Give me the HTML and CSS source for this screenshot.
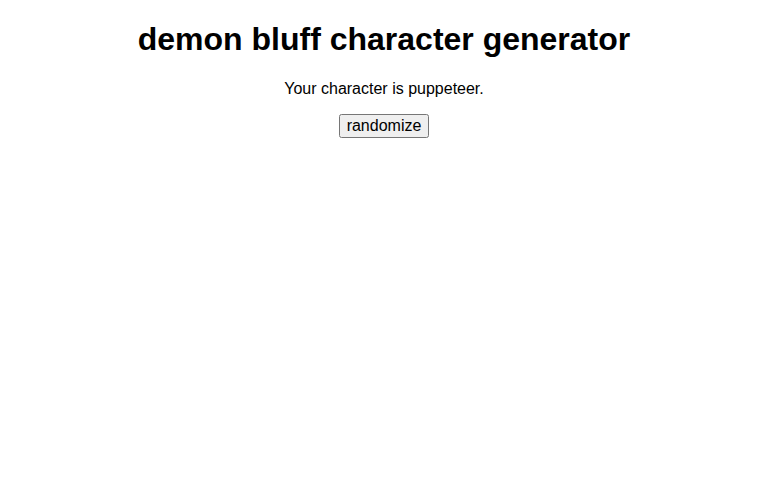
FILE: index.html
```html
<!DOCTYPE html>
<html>
<head>
  <title>demon bluff character generator</title>
  <link rel="stylesheet" href="styles.css">
</head>
<body>
  <div class="container">
    <h1>demon bluff character generator</h1>
    <p id="result">Your character is puppeteer.</p>
    <button class="button" onclick="randomize()">randomize</button>
  </div>
</body>
</html>
```
FILE: styles.css
```css
body {
  font-family: "Liberation Sans", Arial, sans-serif;
  margin: 0;
  background: white;
  color: black;
}
.container {
  text-align: center;
}
h1 {
  font-size: 32px;
  margin: 21px 0 22px;
}
p {
  margin: 16px 0;
}
.button {
  font-family: "Liberation Sans", Arial, sans-serif;
  font-size: 16px;
}
```
